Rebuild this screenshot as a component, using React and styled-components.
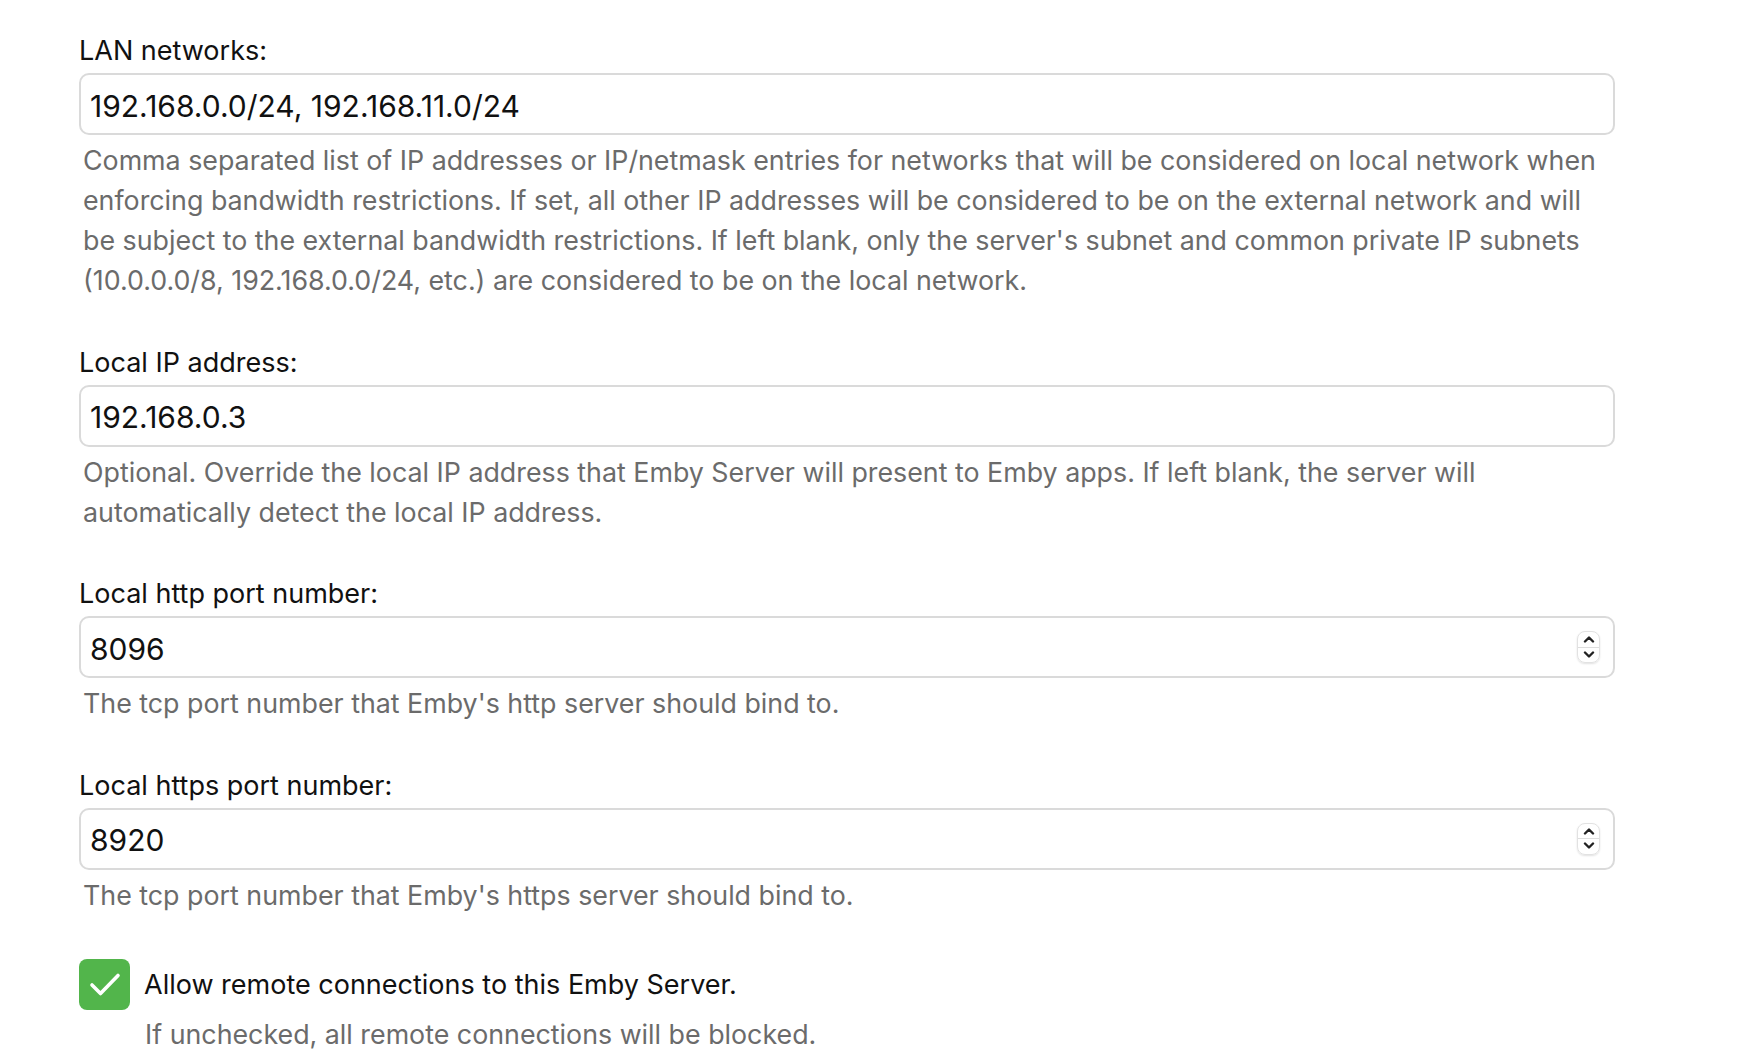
import React from "react";
import styled, { createGlobalStyle } from "styled-components";

const Global = createGlobalStyle`
  html, body { margin: 0; padding: 0; background: #fff; }
  body { font-family: Inter, "Noto Sans", "Liberation Sans", sans-serif; color: #111; }
  * { box-sizing: border-box; }
`;

const Page = styled.div`
  padding: 33px 145px 0 79px;
  display: flex;
  flex-direction: column;
  gap: 44.5px;
`;

const Field = styled.div`
  display: flex;
  flex-direction: column;
`;

const Label = styled.label`
  font-size: 27px;
  line-height: 34px;
  color: #111;
  margin-bottom: 5px;
  padding-top: 1px;
`;

const InputWrap = styled.div`
  position: relative;
  height: 62px;
  border: 2px solid #dadada;
  border-radius: 10px;
  display: flex;
  align-items: center;
  padding: 0 9px;
`;

const Value = styled.span`
  font-size: 30px;
  color: #111;
  flex: 1;
  padding-top: 3px;
`;

const Spinner = styled.div`
  width: 23px;
  height: 32px;
  border: 1px solid #e2e2e2;
  border-radius: 8px;
  box-shadow: 0 1px 2px rgba(0,0,0,0.12);
  display: flex;
  flex-direction: column;
  margin-right: 4px;
  overflow: hidden;
`;

const SpinHalf = styled.div`
  flex: 1;
  display: flex;
  align-items: center;
  justify-content: center;
  border-top: ${(p) => (p.$bottom ? "1px solid #dedede" : "none")};
`;

const Desc = styled.div`
  font-size: 26.8px;
  line-height: 40px;
  color: #6b6b6b;
  padding-left: 4px;
  margin-top: 5px;
  margin-right: -100px;
  white-space: nowrap;
`;

const CheckRow = styled.div`
  display: flex;
  align-items: center;
  gap: 14px;
`;

const Box = styled.div`
  width: 51px;
  height: 51px;
  border-radius: 8px;
  background: #52b54b;
  display: flex;
  align-items: center;
  justify-content: center;
`;

const CheckLabel = styled.span`
  font-size: 27px;
  color: #111;
`;

const CheckDesc = styled(Desc)`
  padding-left: 66px;
  margin-top: 4px;
`;

const Chevron = ({ up }) => (
  <svg width="12" height="8" viewBox="0 0 12 8">
    <path
      d={up ? "M2 6.5 L6 2.5 L10 6.5" : "M2 1.5 L6 5.5 L10 1.5"}
      fill="none"
      stroke="#222"
      strokeWidth="2.4"
      strokeLinecap="round"
      strokeLinejoin="round"
    />
  </svg>
);

const Input = ({ value, spin }) => (
  <InputWrap>
    <Value>{value}</Value>
    {spin && (
      <Spinner>
        <SpinHalf><Chevron up /></SpinHalf>
        <SpinHalf $bottom><Chevron /></SpinHalf>
      </Spinner>
    )}
  </InputWrap>
);

export default function App() {
  return (
    <>
      <Global />
      <Page>
        <Field>
          <Label>LAN networks:</Label>
          <Input value="192.168.0.0/24, 192.168.11.0/24" />
          <Desc>
            Comma separated list of IP addresses or IP/netmask entries for networks that will be considered on local network when
            <br />
            enforcing bandwidth restrictions. If set, all other IP addresses will be considered to be on the external network and will
            <br />
            be subject to the external bandwidth restrictions. If left blank, only the server's subnet and common private IP subnets
            <br />
            (10.0.0.0/8, 192.168.0.0/24, etc.) are considered to be on the local network.
          </Desc>
        </Field>
        <Field>
          <Label>Local IP address:</Label>
          <Input value="192.168.0.3" />
          <Desc>
            Optional. Override the local IP address that Emby Server will present to Emby apps. If left blank, the server will
            <br />
            automatically detect the local IP address.
          </Desc>
        </Field>
        <Field>
          <Label>Local http port number:</Label>
          <Input value="8096" spin />
          <Desc>The tcp port number that Emby's http server should bind to.</Desc>
        </Field>
        <Field>
          <Label>Local https port number:</Label>
          <Input value="8920" spin />
          <Desc>The tcp port number that Emby's https server should bind to.</Desc>
        </Field>
        <Field>
          <CheckRow>
            <Box>
              <svg width="34" height="26" viewBox="0 0 34 26">
                <path d="M4 13 L12.5 21.5 L30 3.5" fill="none" stroke="#fff" strokeWidth="3.6" strokeLinecap="round" strokeLinejoin="round" />
              </svg>
            </Box>
            <CheckLabel>Allow remote connections to this Emby Server.</CheckLabel>
          </CheckRow>
          <CheckDesc>If unchecked, all remote connections will be blocked.</CheckDesc>
        </Field>
      </Page>
    </>
  );
}
